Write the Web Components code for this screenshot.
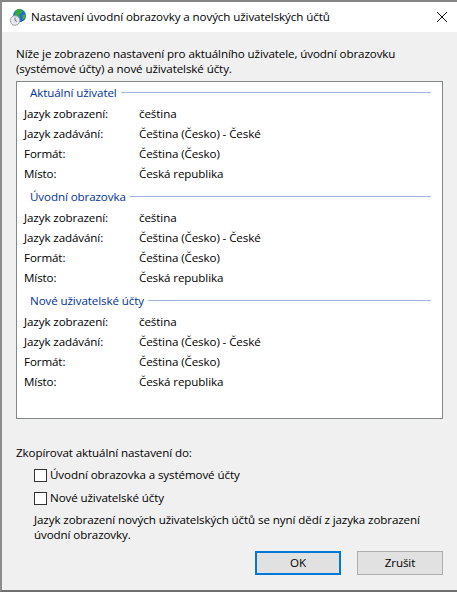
<!DOCTYPE html>
<html lang="cs">
<head>
<meta charset="utf-8">
<title>Nastavení úvodní obrazovky</title>
<style>
  html, body { margin: 0; padding: 0; background: #fff; }
  body { font: 11.6px/16px "Open Sans", "Noto Sans", sans-serif; letter-spacing: -0.1px; color: #000; }
</style>
</head>
<body>
<settings-dialog heading="Nastavení úvodní obrazovky a nových uživatelských účtů">
  <span slot="intro">Níže je zobrazeno nastavení pro aktuálního uživatele, úvodní obrazovku<br>(systémové účty) a nové uživatelské účty.</span>
  <settings-group legend="Aktuální uživatel" input="Čeština (Česko) - České"></settings-group>
  <settings-group legend="Úvodní obrazovka" input="Čeština (Česko) - České"></settings-group>
  <settings-group legend="Nové uživatelské účty" input="Čeština (Česko) - České"></settings-group>
  <span slot="copy-title">Zkopírovat aktuální nastavení do:</span>
  <check-field slot="copy">Úvodní obrazovka a systémové účty</check-field>
  <check-field slot="copy">Nové uživatelské účty</check-field>
  <span slot="note">Jazyk zobrazení nových uživatelských účtů se nyní dědí z jazyka zobrazení<br>úvodní obrazovky.</span>
  <dialog-button slot="buttons" primary>OK</dialog-button>
  <dialog-button slot="buttons">Zrušit</dialog-button>
</settings-dialog>

<script>
class SettingsDialog extends HTMLElement {
  constructor() {
    super();
    this.attachShadow({ mode: 'open' });
  }

  connectedCallback() {
    this.shadowRoot.innerHTML = `
      <style>
        :host {
          display: flex;
          flex-direction: column;
          box-sizing: border-box;
          width: 457px;
          height: 592px;
          border-top: 2px solid #858585;
          border-left: 2px solid #8c8c8c;
          border-bottom: 2px solid #6f6f6f;
          background: #f0f0f0;
        }
        .title {
          display: flex;
          align-items: center;
          height: 30px;
          background: #fff;
          flex: none;
        }
        .title svg.globe { margin-left: 8px; flex: none; }
        .title span { margin-left: 4px; flex: 1; }
        .close { margin-right: 10px; flex: none; }
        .body {
          flex: 1;
          display: flex;
          flex-direction: column;
          padding: 14px 14px 0 14px;
        }
        .intro { height: 35px; line-height: 15px; }
        .list {
          box-sizing: border-box;
          height: 338px;
          border: 1px solid #828790;
          background: #fff;
          padding: 3px 11px 0 7px;
        }
        .copy-title { margin-top: 26px; }
        .copy {
          display: flex;
          flex-direction: column;
          gap: 7px;
          margin: 6px 0 0 18px;
        }
        .note { margin: 6px 0 0 18px; line-height: 15px; }
        .buttons {
          display: flex;
          justify-content: flex-end;
          gap: 16px;
          margin-top: 9px;
        }
      </style>
      <div class="title">
        <svg class="globe" width="17" height="17" viewBox="0 0 17 17">
          <circle cx="9.5" cy="6.5" r="6.5" fill="#1c6fd2"/>
          <path d="M5 2 C7 0 10 -0.2 12.5 1 L12 4 L9.5 5 L10 8 L7.5 8.5 L5 6 Z" fill="#35a83c"/>
          <path d="M12.5 6 L16 5.5 L15 9.5 L12.5 11 Z" fill="#48b040"/>
          <path d="M9 12.9 C12 13.2 15 11 15.8 8.5 L13 11 Z" fill="#0d3f8c"/>
          <circle cx="5" cy="11.5" r="4.8" fill="#e6e8ec" stroke="#9a9ea6"/>
          <path d="M5 8.5 V11.5 L7 12.5" fill="none" stroke="#6d7078"/>
        </svg>
        <span>${this.getAttribute('heading')}</span>
        <svg class="close" width="10" height="10" viewBox="0 0 10 10">
          <path d="M0 0 L10 10 M10 0 L0 10" stroke="#111" stroke-width="1" fill="none"/>
        </svg>
      </div>
      <div class="body">
        <div class="intro"><slot name="intro"></slot></div>
        <div class="list"><slot></slot></div>
        <div class="copy-title"><slot name="copy-title"></slot></div>
        <div class="copy"><slot name="copy"></slot></div>
        <div class="note"><slot name="note"></slot></div>
        <div class="buttons"><slot name="buttons"></slot></div>
      </div>
    `;
  }
}

class SettingsGroup extends HTMLElement {
  constructor() {
    super();
    this.attachShadow({ mode: 'open' });
  }

  connectedCallback() {
    const rows = [
      ['Jazyk zobrazení:', 'čeština'],
      ['Jazyk zadávání:', this.getAttribute('input')],
      ['Formát:', 'Čeština (Česko)'],
      ['Místo:', 'Česká republika'],
    ];
    this.shadowRoot.innerHTML = `
      <style>
        :host { display: block; height: 104px; }
        .legend {
          display: flex;
          align-items: flex-start;
          height: 16px;
          padding-left: 6px;
          color: #003399;
        }
        .legend i { flex: 1; height: 1px; margin: 7px 0 0 4px; background: #a0b4e0; }
        .rows {
          display: grid;
          grid-template-columns: 115px 1fr;
          grid-auto-rows: 20px;
          align-items: center;
          margin-top: 3px;
        }
      </style>
      <div class="legend"><span>${this.getAttribute('legend')}</span><i></i></div>
      <div class="rows">
        ${rows.map(([label, value]) => `<span>${label}</span><span>${value}</span>`).join('')}
      </div>
    `;
  }
}

class CheckField extends HTMLElement {
  constructor() {
    super();
    this.attachShadow({ mode: 'open' });
  }

  connectedCallback() {
    this.shadowRoot.innerHTML = `
      <style>
        :host { display: flex; align-items: center; height: 16px; gap: 3px; }
        .box {
          box-sizing: border-box;
          width: 13px;
          height: 13px;
          border: 1px solid #333;
          background: #fff;
          flex: none;
        }
      </style>
      <span class="box"></span><slot></slot>
    `;
  }
}

class DialogButton extends HTMLElement {
  constructor() {
    super();
    this.attachShadow({ mode: 'open' });
  }

  connectedCallback() {
    this.shadowRoot.innerHTML = `
      <style>
        :host {
          display: flex;
          align-items: center;
          justify-content: center;
          box-sizing: border-box;
          width: 86px;
          height: 24px;
          background: #e1e1e1;
          border: 1px solid #adadad;
        }
        :host([primary]) { border: 2px solid #0078d7; }
      </style>
      <slot></slot>
    `;
  }
}

customElements.define('settings-dialog', SettingsDialog);
customElements.define('settings-group', SettingsGroup);
customElements.define('check-field', CheckField);
customElements.define('dialog-button', DialogButton);
</script>
</body>
</html>
